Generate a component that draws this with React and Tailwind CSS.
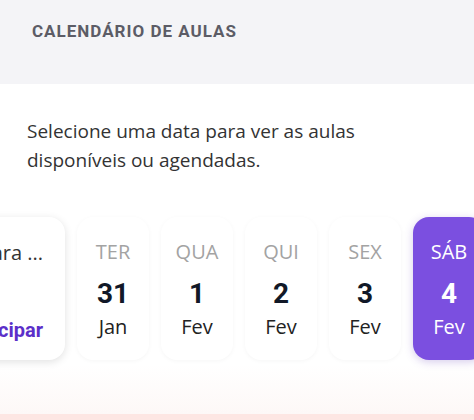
const days = [
  { wd: 'TER', n: '31', m: 'Jan' },
  { wd: 'QUA', n: '1', m: 'Fev' },
  { wd: 'QUI', n: '2', m: 'Fev' },
  { wd: 'SEX', n: '3', m: 'Fev' },
  { wd: 'SÁB', n: '4', m: 'Fev', active: true },
];

const DayCard = ({ day }) => (
  <div
    className={`w-[72px] shrink-0 h-[143px] rounded-[16px] flex flex-col items-center pt-[21px] ${
      day.active
        ? 'bg-[#7b4fe0] text-white shadow-[0_2px_8px_rgba(90,50,180,0.25)]'
        : 'bg-white shadow-[0_1px_4px_rgba(0,0,0,0.04)]'
    }`}
  >
    <span
      className={`text-[20px] leading-[28px] font-['Open_Sans',sans-serif] ${
        day.active ? 'text-white' : 'text-[#a3a3a3]'
      }`}
    >
      {day.wd}
    </span>
    <span
      className={`mt-[13px] text-[28px] leading-[30px] font-bold font-['Roboto',sans-serif] ${
        day.active ? 'text-white' : 'text-[#111827]'
      }`}
    >
      {day.n}
    </span>
    <span
      className={`mt-[3px] text-[20px] leading-[30px] font-['Open_Sans',sans-serif] ${
        day.active ? 'text-white' : 'text-[#222]'
      }`}
    >
      {day.m}
    </span>
  </div>
);

export default function App() {
  return (
    <div className="w-[474px] h-[420px] overflow-hidden bg-white flex flex-col">
      <div className="h-[84px] shrink-0 bg-[#f4f4f7] pl-[32px] pt-[19px]">
        <h2 className="text-[17px] leading-[24px] font-bold tracking-[1px] text-[#5c5c66] font-['Roboto',sans-serif]">
          CALENDÁRIO DE AULAS
        </h2>
      </div>

      <div className="flex-1 bg-gradient-to-b from-white from-[85%] to-[#fdf8f7]">
        <p className="pl-[27px] pt-[33px] pr-4 text-[19px] leading-[29px] text-[#333] font-['Open_Sans',sans-serif]">
          Selecione uma data para ver as aulas disponíveis ou agendadas.
        </p>

        <div className="mt-[42px] flex gap-3 pb-4">
          <div className="ml-[-135px] w-[200px] shrink-0 h-[143px] rounded-[16px] bg-white shadow-[0_2px_8px_rgba(0,0,0,0.12)] flex flex-col justify-between pt-[20px] pb-[16px] pr-[22px]">
            <span className="text-right text-[20px] leading-[32px] text-[#333] font-['Open_Sans',sans-serif] whitespace-nowrap">
              Agendar para ...
            </span>
            <span className="text-right text-[20px] leading-[28px] font-bold text-[#5b2fc9] font-['Roboto',sans-serif] whitespace-nowrap">
              Participar
            </span>
          </div>
          {days.map((d) => (
            <DayCard key={d.wd} day={d} />
          ))}
        </div>
      </div>

      <div className="h-[6px] shrink-0 bg-[#fde6e3]" />
    </div>
  );
}
